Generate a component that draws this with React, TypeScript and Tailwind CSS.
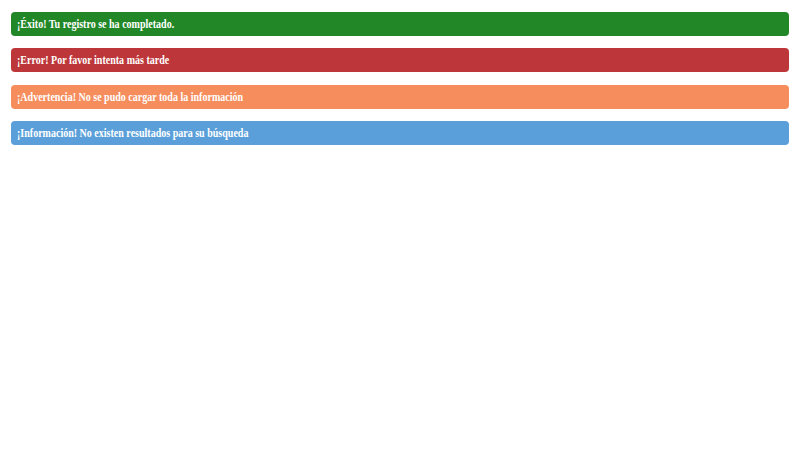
const alerts = [
  { text: "¡Éxito! Tu registro se ha completado.", bg: "bg-[#218727]" },
  { text: "¡Error! Por favor intenta más tarde", bg: "bg-[#bd3639]" },
  { text: "¡Advertencia! No se pudo cargar toda la información", bg: "bg-[#f68d5d]" },
  { text: "¡Información! No existen resultados para su búsqueda", bg: "bg-[#5a9fd9]" },
];

export default function App() {
  return (
    <div className="min-h-[450px] bg-white px-[11px] pt-[12px] flex flex-col gap-[12.4px] font-['Liberation_Serif',serif]">
      {alerts.map((a) => (
        <div
          key={a.text}
          className={`${a.bg} h-[24px] rounded-[4px] px-[6px] flex items-center text-white text-[12px] font-bold`}
        >
          <span className="inline-block whitespace-nowrap origin-left scale-x-[0.835]">{a.text}</span>
        </div>
      ))}
    </div>
  );
}
